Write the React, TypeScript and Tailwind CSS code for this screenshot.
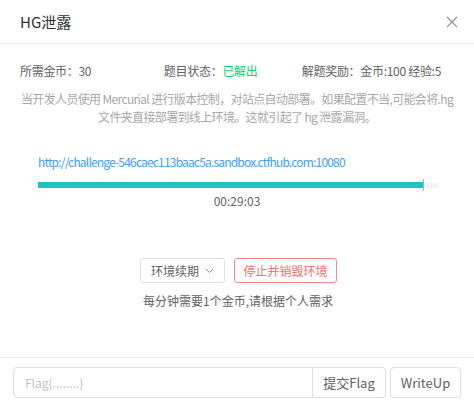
import React from "react";

export default function App() {
  const font = { fontFamily: '"Noto Sans CJK SC", "Noto Sans", sans-serif' };
  return (
    <div className="w-[474px] h-[405px] bg-white flex flex-col overflow-hidden" style={font}>
      <div className="h-[44px] shrink-0 border-b border-[#ebeef5] flex items-center justify-between pl-[20px] pr-[16px]">
        <span className="text-[15px] leading-[20px] text-[#303133]">HG泄露</span>
        <svg width="12" height="12" viewBox="0 0 12 12" className="text-[#909399]">
          <path d="M1 1 L11 11 M11 1 L1 11" stroke="currentColor" strokeWidth="1.2" fill="none" />
        </svg>
      </div>
      <div className="flex-1 min-h-0 overflow-hidden flex flex-col">
        <div className="flex items-center pt-[17px] pl-[20px] pr-[33px] text-[12px] text-[#606266] leading-[20px] whitespace-nowrap tracking-[-0.3px]">
          <div className="w-[146px]">所需金币：30</div>
          <div className="w-[140px]">题目状态：<span className="text-[#13ce66]">已解出</span></div>
          <div className="flex-1 text-right">解题奖励：金币:100 经验:5</div>
        </div>
        <div className="mt-[9px] text-center text-[12px] leading-[18px] text-[#a8a8a8] whitespace-nowrap tracking-[-0.65px]">
          <div>当开发人员使用 Mercurial 进行版本控制，对站点自动部署。如果配置不当,可能会将.hg</div>
          <div>文件夹直接部署到线上环境。这就引起了 hg 泄露漏洞。</div>
        </div>
        <div className="mt-[28px] pl-[38px] text-[12px] leading-[16px] text-[#409eff] whitespace-nowrap tracking-[-0.82px]">
          http://challenge-546caec113baac5a.sandbox.ctfhub.com:10080
        </div>
        <div className="mt-[9px] h-[12px] pl-[38px] pr-[36px] flex items-center">
          <div className="flex-1 h-[6px] bg-[#1fc1c3]" />
          <div className="w-[1px] h-[12px] bg-[#1fc1c3] opacity-70" />
          <span className="ml-[2px] text-[7px] leading-[8px] text-[#e0e0e0]">100</span>
        </div>
        <div className="mt-[1px] text-center text-[12px] leading-[18px] text-[#606266]">00:29:03</div>
        <div className="mt-[48px] flex justify-center gap-[9px] pl-[3px]">
          <button className="w-[85px] h-[25px] border border-[#dcdfe6] rounded-[3px] text-[12px] text-[#606266] flex items-center justify-center gap-[6px]">
            环境续期
            <svg width="9" height="6" viewBox="0 0 9 6">
              <path d="M1 1 L4.5 4.5 L8 1" stroke="#909399" strokeWidth="1" fill="none" />
            </svg>
          </button>
          <button className="w-[103px] h-[25px] border border-[#f78989] rounded-[3px] text-[12px] text-[#f56c6c] flex items-center justify-center">
            停止并销毁环境
          </button>
        </div>
        <div className="mt-[9px] text-center text-[12px] leading-[18px] text-[#606266] pl-[2px]">每分钟需要1个金币,请根据个人需求</div>
      </div>
      <div className="h-[48px] shrink-0 border-t border-[#ebeef5] flex items-start pt-[9px] pl-[13px] pr-[13px]">
        <div className="flex h-[31px]">
          <div className="w-[300px] h-full border border-[#dcdfe6] rounded-l-[4px] flex items-center pl-[11px] text-[12px] text-[#c0c4cc]">
            Flag{"{........}"}
          </div>
          <div className="w-[73px] h-full border border-l-0 border-[#dcdfe6] rounded-r-[4px] bg-white flex items-center justify-center text-[13px] text-[#606266]">
            提交Flag
          </div>
        </div>
        <div className="ml-[4px] w-[71px] h-[31px] border border-[#dcdfe6] rounded-[4px] flex items-center justify-center text-[13px] text-[#606266]">
          WriteUp
        </div>
      </div>
    </div>
  );
}
